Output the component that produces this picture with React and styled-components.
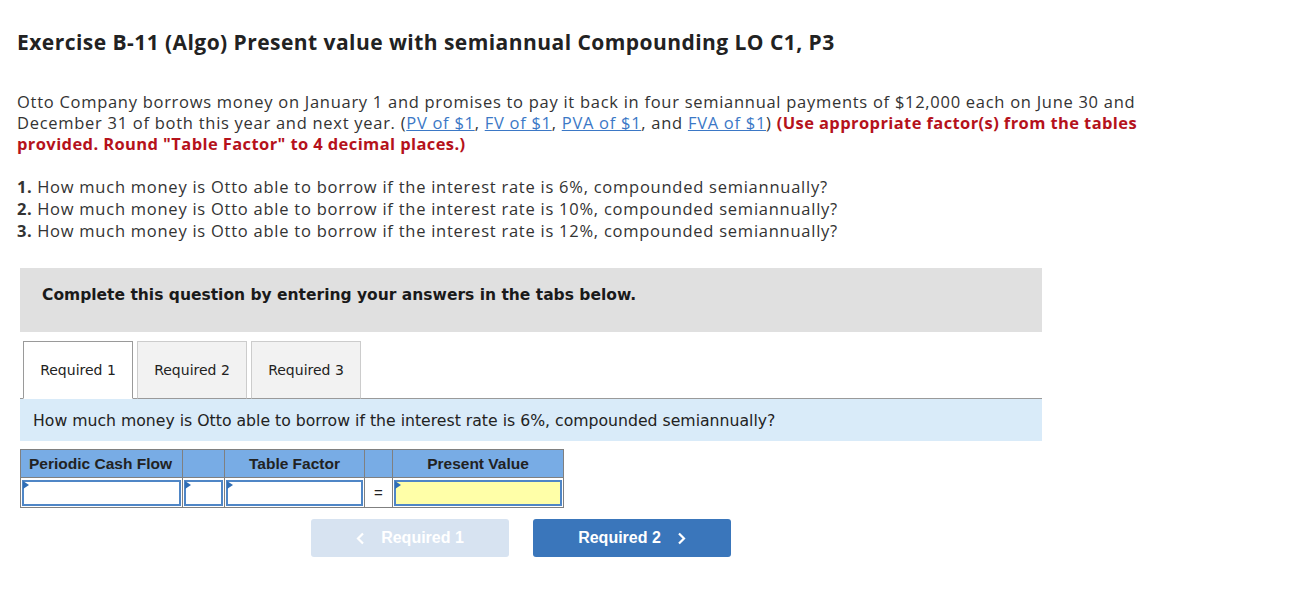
import React from "react";
import styled, { createGlobalStyle } from "styled-components";

const GlobalStyle = createGlobalStyle`
  body {
    margin: 0;
    background: #ffffff;
    font-family: "Open Sans", "Liberation Sans", sans-serif;
    color: #333333;
  }
`;

const Page = styled.div`
  padding: 28px 17px 40px;
`;

const Title = styled.h1`
  margin: 0;
  font-size: 21px;
  line-height: 28px;
  font-weight: 700;
  letter-spacing: 0.45px;
  color: #222222;
`;

const Intro = styled.p`
  margin: 35px 0 0;
  font-size: 16.5px;
  line-height: 21px;
  letter-spacing: 0.72px;
  color: #333333;
  white-space: nowrap;
`;

const Link = styled.a`
  color: #3b78c6;
  text-decoration: underline;
`;

const Warn = styled.strong`
  color: #b5121b;
  font-weight: 700;
  letter-spacing: 0.4px;
`;

const Questions = styled.div`
  margin-top: 22px;
  font-size: 16.5px;
  line-height: 22px;
  letter-spacing: 0.75px;

  b {
    letter-spacing: 0.5px;
  }
`;

const Panel = styled.div`
  margin: 26px 0 0 3px;
  width: 1022px;
`;

const Instruction = styled.div`
  box-sizing: border-box;
  height: 64px;
  padding: 18px 22px;
  background: #e0e0e0;
  font-family: "DejaVu Sans", Verdana, sans-serif;
  font-weight: 700;
  font-size: 15.5px;
  line-height: 18px;
  color: #1a1a1a;
`;

const TabBar = styled.div`
  display: flex;
  gap: 4px;
  margin-top: 9px;
  padding-left: 3px;
  border-bottom: 1px solid #9a9a9a;
`;

const Tab = styled.div`
  box-sizing: border-box;
  width: 110px;
  height: 58px;
  margin-bottom: -1px;
  display: flex;
  align-items: center;
  justify-content: center;
  font-family: "DejaVu Sans", Tahoma, sans-serif;
  font-size: 14px;
  color: #222222;
  background: ${(p) => (p.$active ? "#ffffff" : "#f2f2f2")};
  border: 1px solid ${(p) => (p.$active ? "#9a9a9a" : "#cccccc")};
  border-bottom: ${(p) => (p.$active ? "1px solid #ffffff" : "1px solid #9a9a9a")};
`;

const Prompt = styled.div`
  height: 42px;
  display: flex;
  align-items: center;
  padding-left: 13px;
  background: #d9ebf9;
  font-family: "DejaVu Sans", Verdana, sans-serif;
  font-size: 15.7px;
  color: #222222;
`;

const Grid = styled.table`
  margin-top: 8px;
  border-collapse: collapse;
  table-layout: fixed;
  border: 1px solid #808080;
  font-family: "Liberation Sans", Arial, sans-serif;
`;

const Head = styled.th`
  height: 27px;
  padding: 0 8px;
  background: #78ace5;
  border: 1px solid #808080;
  font-size: 15.5px;
  font-weight: 700;
  color: #222222;
  text-align: ${(p) => p.$align || "center"};
`;

const Cell = styled.td`
  height: 27px;
  padding: 1px;
  border: 1px solid #808080;
  background: #ffffff;
  text-align: center;
  font-size: 15px;
  color: #222222;
`;

const Field = styled.div`
  position: relative;
  box-sizing: border-box;
  height: 26px;
  border: 2px solid #4f86c6;
  background: ${(p) => (p.$result ? "#ffffa8" : "#ffffff")};

  &::before {
    content: "";
    position: absolute;
    top: -1px;
    left: -1px;
    border-top: 4px solid transparent;
    border-bottom: 4px solid transparent;
    border-left: 6px solid #2f6db5;
  }
`;

const Nav = styled.div`
  display: flex;
  gap: 24px;
  margin-top: 11px;
  padding-left: 291px;
`;

const NavButton = styled.button`
  width: 198px;
  height: 38px;
  border: none;
  border-radius: 3px;
  display: flex;
  align-items: center;
  justify-content: center;
  gap: 16px;
  font-family: "Liberation Sans", Arial, sans-serif;
  font-size: 16px;
  font-weight: 700;
  color: #ffffff;
  background: ${(p) => (p.disabled ? "#d7e3f1" : "#3a76bb")};
`;

const Chevron = ({ dir }) => (
  <svg width="9" height="13" viewBox="0 0 9 13">
    <polyline
      points={dir === "left" ? "7,1.5 2,6.5 7,11.5" : "2,1.5 7,6.5 2,11.5"}
      fill="none"
      stroke="#ffffff"
      strokeWidth="2.2"
    />
  </svg>
);

const App = () => {
  return (
    <Page>
      <GlobalStyle />
      <Title>Exercise B-11 (Algo) Present value with semiannual Compounding LO C1, P3</Title>
      <Intro>
        Otto Company borrows money on January 1 and promises to pay it back in four semiannual payments of $12,000 each on June 30 and
        <br />
        December 31 of both this year and next year. (<Link>PV of $1</Link>, <Link>FV of $1</Link>, <Link>PVA of $1</Link>, and{" "}
        <Link>FVA of $1</Link>) <Warn>(Use appropriate factor(s) from the tables</Warn>
        <br />
        <Warn>provided. Round "Table Factor" to 4 decimal places.)</Warn>
      </Intro>
      <Questions>
        <div><b>1.</b> How much money is Otto able to borrow if the interest rate is 6%, compounded semiannually?</div>
        <div><b>2.</b> How much money is Otto able to borrow if the interest rate is 10%, compounded semiannually?</div>
        <div><b>3.</b> How much money is Otto able to borrow if the interest rate is 12%, compounded semiannually?</div>
      </Questions>
      <Panel>
        <Instruction>Complete this question by entering your answers in the tabs below.</Instruction>
        <TabBar>
          <Tab $active>Required 1</Tab>
          <Tab>Required 2</Tab>
          <Tab>Required 3</Tab>
        </TabBar>
        <Prompt>How much money is Otto able to borrow if the interest rate is 6%, compounded semiannually?</Prompt>
        <Grid>
          <colgroup>
            <col style={{ width: 162 }} />
            <col style={{ width: 42 }} />
            <col style={{ width: 140 }} />
            <col style={{ width: 28 }} />
            <col style={{ width: 171 }} />
          </colgroup>
          <thead>
            <tr>
              <Head $align="left">Periodic Cash Flow</Head>
              <Head />
              <Head>Table Factor</Head>
              <Head />
              <Head>Present Value</Head>
            </tr>
          </thead>
          <tbody>
            <tr>
              <Cell><Field /></Cell>
              <Cell><Field /></Cell>
              <Cell><Field /></Cell>
              <Cell>=</Cell>
              <Cell><Field $result /></Cell>
            </tr>
          </tbody>
        </Grid>
        <Nav>
          <NavButton disabled>
            <Chevron dir="left" />
            Required 1
          </NavButton>
          <NavButton>
            Required 2
            <Chevron dir="right" />
          </NavButton>
        </Nav>
      </Panel>
    </Page>
  );
};

export default App;
